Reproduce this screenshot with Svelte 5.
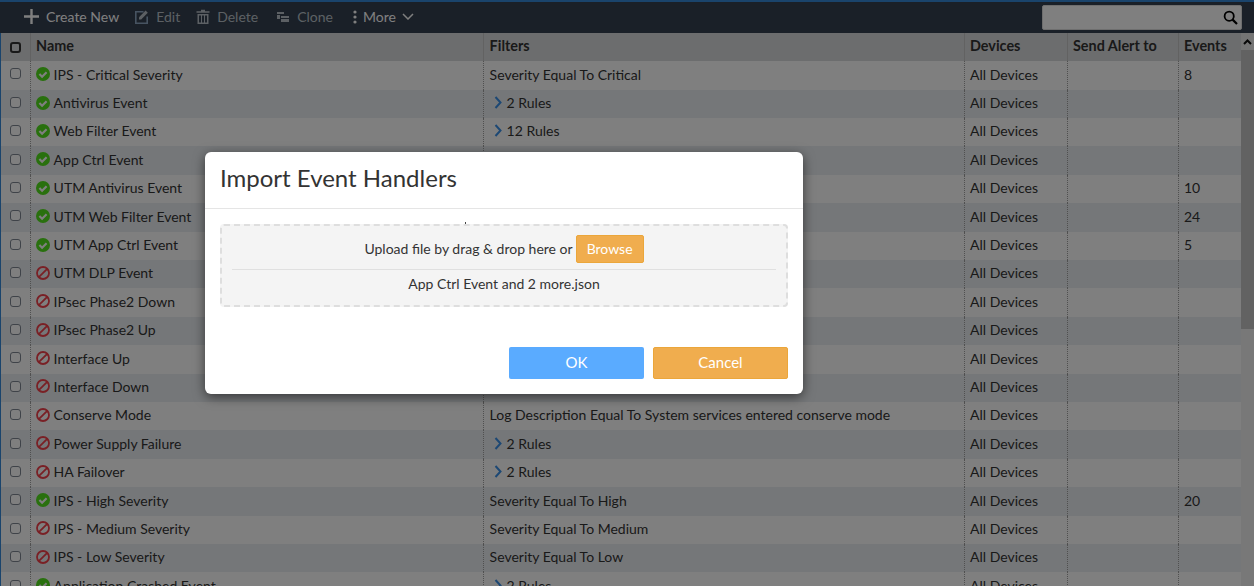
<script>
	const rows = [
		{ name: "IPS - Critical Severity", on: true, filter: "Severity Equal To Critical", events: "8" },
		{ name: "Antivirus Event", on: true, rules: 2 },
		{ name: "Web Filter Event", on: true, rules: 12 },
		{ name: "App Ctrl Event", on: true, rules: 2 },
		{ name: "UTM Antivirus Event", on: true, filter: "", events: "10" },
		{ name: "UTM Web Filter Event", on: true, filter: "", events: "24" },
		{ name: "UTM App Ctrl Event", on: true, filter: "", events: "5" },
		{ name: "UTM DLP Event", on: false, filter: "" },
		{ name: "IPsec Phase2 Down", on: false, filter: "" },
		{ name: "IPsec Phase2 Up", on: false, filter: "" },
		{ name: "Interface Up", on: false, filter: "" },
		{ name: "Interface Down", on: false, filter: "" },
		{ name: "Conserve Mode", on: false, filter: "Log Description Equal To System services entered conserve mode" },
		{ name: "Power Supply Failure", on: false, rules: 2 },
		{ name: "HA Failover", on: false, rules: 2 },
		{ name: "IPS - High Severity", on: true, filter: "Severity Equal To High", events: "20" },
		{ name: "IPS - Medium Severity", on: false, filter: "Severity Equal To Medium" },
		{ name: "IPS - Low Severity", on: false, filter: "Severity Equal To Low" },
		{ name: "Application Crashed Event", on: true, rules: 2 }
	];
</script>

<div class="page">
	<div class="toolbar">
		<button class="tool create">
			<svg width="15" height="15" viewBox="0 0 15 15"><path d="M7.500 0v15M0 7.500h15" stroke="#fff" stroke-width="2.400" fill="none" /></svg>
			Create New
		</button>
		<button class="tool muted">
			<svg width="15" height="15" viewBox="0 0 15 15"><path d="M1 2h8.500v1.600H2.600v9.800h9.800V7.500H14V15H1z" fill="#8fa8c4" /><path d="M5 8.200 11.600 1.600l2.200 2.200L7.200 10.400H5z" fill="#b9c0c8" /></svg>
			Edit
		</button>
		<button class="tool muted">
			<svg width="14" height="15" viewBox="0 0 14 15"><path d="M5 .7h4v1.600h4.500v1.400H.5V2.300H5zM1.500 5h11v10h-11zM3 6.400v7.200h2V6.400zm3 0v7.200h2V6.400zm3 0v7.200h2V6.400z" fill="#b9c0c8" fill-rule="evenodd" /></svg>
			Delete
		</button>
		<button class="tool muted clone">
			<svg width="14" height="12" viewBox="0 0 14 12"><path d="M1 1h7v2H1zM1 4h3v4H1zM5 5h8v2H5zM5 8h8v3H5z" fill="#b9c0c8" /></svg>
			Clone
		</button>
		<button class="tool more">
			<svg width="4" height="14" viewBox="0 0 4 14"><circle cx="2" cy="2" r="1.600" fill="#fff" /><circle cx="2" cy="7" r="1.600" fill="#fff" /><circle cx="2" cy="12" r="1.600" fill="#fff" /></svg>
			More
			<svg width="12" height="7" viewBox="0 0 12 7"><path d="M1 1l5 5 5-5" stroke="#fff" stroke-width="1.500" fill="none" /></svg>
		</button>
		<div class="search">
			<svg width="15" height="15" viewBox="0 0 15 15"><circle cx="6.200" cy="6.200" r="4.600" stroke="#000" stroke-width="1.800" fill="none" /><path d="M9.600 9.600l4.400 4.400" stroke="#000" stroke-width="2.200" /></svg>
		</div>
	</div>

	<div class="body">
		<div class="table">
			<div class="row head">
				<div class="cell check"><span class="box strong"></span></div>
				<div class="cell">Name</div>
				<div class="cell filters">Filters</div>
				<div class="cell">Devices</div>
				<div class="cell">Send Alert to</div>
				<div class="cell">Events</div>
			</div>
			{#each rows as row, i}
				<div class="row" class:alt={i % 2 === 1}>
					<div class="cell check"><span class="box"></span></div>
					<div class="cell name">
						{#if row.on}
							<svg width="14" height="14" viewBox="0 0 14 14"><circle cx="7" cy="7" r="7" fill="#52e01c" /><path d="M3.400 7l2.700 2.700 4.500-4.500" stroke="#fff" stroke-width="2.200" fill="none" /></svg>
						{:else}
							<svg width="14" height="14" viewBox="0 0 14 14"><circle cx="7" cy="7" r="6" stroke="#f2404a" stroke-width="1.800" fill="none" /><path d="M2.800 11.200l8.400-8.400" stroke="#f2404a" stroke-width="1.800" /></svg>
						{/if}
						{row.name}
					</div>
					<div class="cell filters">
						{#if row.rules}
							<svg class="chev" width="8" height="13" viewBox="0 0 8 13"><path d="M1.500 1l5 5.500-5 5.500" stroke="#3a90e8" stroke-width="2" fill="none" /></svg>
							{row.rules} Rules
						{:else}
							{row.filter}
						{/if}
					</div>
					<div class="cell">All Devices</div>
					<div class="cell"></div>
					<div class="cell">{row.events ?? ""}</div>
				</div>
			{/each}
		</div>
		<div class="scrollbar">
			<div class="arrow">
				<svg width="9" height="6" viewBox="0 0 9 6"><path d="M1 5l3.500-3.500L8 5" stroke="#111" stroke-width="2" fill="none" /></svg>
			</div>
			<div class="thumb"></div>
		</div>
	</div>

	<div class="overlay"></div>

	<div class="modal">
		<span class="speck"></span>
		<h2>Import Event Handlers</h2>
		<div class="content">
			<div class="drop">
				<div class="upload">
					Upload file by drag &amp; drop here or
					<button class="browse">Browse</button>
				</div>
				<div class="file">App Ctrl Event and 2 more.json</div>
			</div>
		</div>
		<div class="actions">
			<button class="ok">OK</button>
			<button class="cancel">Cancel</button>
		</div>
	</div>
</div>

<style>
	:global(body) {
		margin: 0;
		overflow: hidden;
	}

	.page {
		position: relative;
		display: flex;
		flex-direction: column;
		width: 1254px;
		height: 586px;
		overflow: hidden;
		font-family: Lato, "Open Sans", sans-serif;
		font-size: 14px;
		color: #333;
		background: #fff;
	}

	button {
		font-family: inherit;
		border: 0;
		padding: 0;
		background: none;
	}

	.toolbar {
		flex: none;
		display: flex;
		align-items: center;
		box-sizing: border-box;
		height: 33px;
		padding-left: 24px;
		border-top: 2px solid #3488d8;
		background: #344050;
	}

	.tool {
		display: flex;
		align-items: center;
		gap: 7px;
		margin-right: 16px;
		padding-bottom: 2px;
		font-size: 14px;
		color: #fff;
	}

	.tool.create {
		margin-right: 15px;
	}

	.tool.muted {
		color: #b9c0c8;
	}

	.clone {
		margin-left: 2px;
		margin-right: 20px;
	}

	.more {
		margin-right: 0;
		gap: 6px;
	}

	.search {
		display: flex;
		align-items: center;
		justify-content: flex-end;
		box-sizing: border-box;
		width: 200px;
		height: 25px;
		margin-left: auto;
		margin-right: 12px;
		padding-right: 3px;
		border: 1px solid #ddd;
		border-radius: 2px;
		background: #fff;
	}

	.body {
		flex: 1;
		display: flex;
		min-height: 0;
		border-left: 1px solid #3488d8;
	}

	.table {
		flex: 1;
		min-width: 0;
	}

	.row {
		display: grid;
		grid-template-columns: 29px 453px 481px 103px 111px 62px;
		height: 28.4px;
		background: #fff;
	}

	.row.alt {
		background: #ebeff3;
	}

	.row.head {
		height: 28.3px;
		font-size: 14.4px;
		font-weight: 700;
		background: #d9dadc;
	}

	.cell {
		display: flex;
		align-items: center;
		gap: 3px;
		box-sizing: border-box;
		padding-left: 5px;
		padding-bottom: 2.6px;
		border-left: 1px dotted #a0a0a0;
		white-space: nowrap;
	}

	.cell.filters {
		padding-left: 5.6px;
	}

	.cell.name {
		gap: 3.6px;
	}

	.head .cell {
		border-left: 1px solid #c4c4c4;
	}

	.cell.check,
	.head .cell.check {
		justify-content: center;
		padding: 0;
		border-left: 0;
	}

	.box {
		display: block;
		box-sizing: border-box;
		width: 11px;
		height: 11px;
		margin-top: -3px;
		border: 1px solid #7f8792;
		border-radius: 3px;
		background: #fff;
	}

	.box.strong {
		margin-top: 0;
		border: 2px solid #333;
		background: transparent;
	}

	.chev {
		margin-left: 4px;
		margin-right: 2px;
	}

	.scrollbar {
		flex: none;
		width: 13px;
		background: #f1f1f1;
	}

	.arrow {
		display: flex;
		align-items: center;
		justify-content: center;
		height: 17px;
		background: #e8e8e8;
	}

	.thumb {
		height: 279px;
		background: #c4c4c4;
	}

	.overlay {
		position: absolute;
		inset: 0;
		background: rgba(0, 0, 0, 0.5);
	}

	.modal {
		position: absolute;
		left: 205px;
		top: 152px;
		display: flex;
		flex-direction: column;
		box-sizing: border-box;
		width: 598px;
		height: 242px;
		border-radius: 6px;
		background: #fff;
		box-shadow: 0 3px 12px rgba(0, 0, 0, 0.55);
	}

	.speck {
		position: absolute;
		left: 260px;
		top: 70px;
		width: 1px;
		height: 2px;
		background: #444;
	}

	h2 {
		box-sizing: border-box;
		height: 57px;
		margin: 0;
		padding: 11px 15px 0;
		border-bottom: 1px solid #e5e5e5;
		font-size: 24px;
		font-weight: 400;
		line-height: 30px;
	}

	.content {
		padding: 15px 15px 0;
	}

	.drop {
		box-sizing: border-box;
		height: 83px;
		padding: 0 10px;
		border: 2px dashed #dedede;
		border-radius: 4px;
		background: #f4f4f4;
		text-align: center;
	}

	.upload {
		display: flex;
		align-items: center;
		justify-content: center;
		gap: 3px;
		height: 41px;
		padding-top: 2px;
		border-bottom: 1px solid #e0e0e0;
	}

	.file {
		line-height: 27px;
	}

	.browse {
		box-sizing: border-box;
		width: 68px;
		height: 28px;
		margin-top: 1px;
		padding-bottom: 1px;
		border: 1px solid #eba63a;
		border-radius: 2px;
		font-size: 14px;
		color: #fff;
		background: #f0ad4e;
	}

	.actions {
		display: flex;
		justify-content: flex-end;
		gap: 9px;
		margin-top: 40px;
		padding-right: 15px;
	}

	.actions button {
		box-sizing: border-box;
		width: 135px;
		height: 32px;
		padding-bottom: 2px;
		border-radius: 2px;
		font-size: 15px;
		color: #fff;
	}

	.ok {
		background: #5aabff;
	}

	.cancel {
		border: 1px solid #eba63a;
		background: #f0ad4e;
	}
</style>
